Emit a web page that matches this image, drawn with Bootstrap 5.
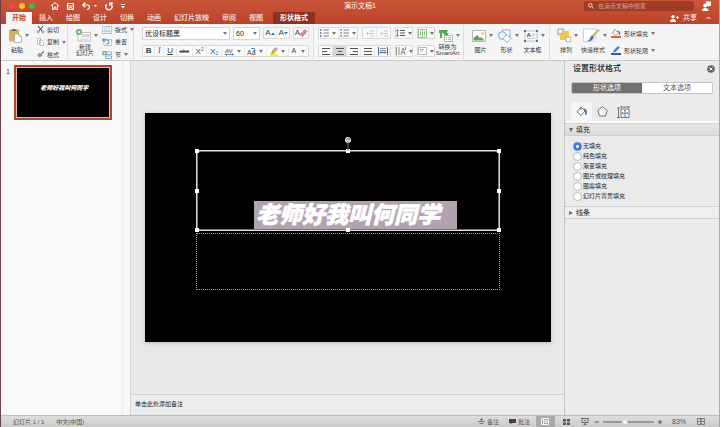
<!DOCTYPE html>
<html lang="zh-CN">
<head>
<meta charset="utf-8">
<meta name="viewport" content="width=device-width, initial-scale=1">
<title>演示文稿1</title>
<link href="https://cdn.jsdelivr.net/npm/bootstrap@5.3.0/dist/css/bootstrap.min.css" rel="stylesheet">
<style>
:root{--ink:#333;--line:#d2d2d2}
body{font:6px/8px "Liberation Sans","Noto Sans CJK SC",sans-serif;color:var(--ink);background:#ececec;border-left:1px solid #6f3f4c;border-right:1px solid #a9a9a9}
svg{display:block;flex:none;overflow:visible}
.btn,.form-select,.form-control{font-size:6px;line-height:8px;padding:0;border-radius:0;color:inherit;min-height:0}
.btn{border:0;display:inline-flex;align-items:center;justify-content:center;white-space:nowrap}
.caret{flex:none;border:solid transparent;border-width:3px 2px 0;border-top-color:#777;width:0;height:0}
/* title bar and tabs */
.top-area{background:linear-gradient(#ca563a,#c34c31 50%,#b9422a);color:#fff}
.title-row{height:12px;display:grid;grid-template-columns:1fr auto 1fr;align-items:center;font-size:7px}
.light{width:6px;height:6px;border-radius:50%}
.search-box{width:110px;height:10px;background:#a23b26;border-radius:2px}
.search-box input{background:transparent;border:0;color:#fff;height:10px}
.search-box input::placeholder{color:#dfa797;opacity:1}
.tab-row{height:12px;gap:1px;padding-left:5px}
.tab-row .nav-link{font-size:7px;line-height:11px;padding:0 6px;color:#fbe9e4;font-weight:500}
.tab-row .nav-link.active{background:#f7f6f6;color:#bf4327;font-weight:700;line-height:12px}
.tab-row .nav-link.context{background:#8d3020;color:#fff;font-weight:700;padding:0 7px;margin-left:3px;border-radius:2px 2px 0 0}
.share{font-size:7px!important}
/* ribbon */
.ribbon{display:grid;grid-template-columns:67fr 66fr 180fr 150fr 86fr 169fr;height:37px;background:#f6f5f5;border-bottom:1px solid #c9c9c9}
.ribbon-group{border-right:1px solid #dedede;margin:1px 0;display:flex;min-width:0;white-space:nowrap}
.ribbon-group:last-child{border:0}
.rows{padding:2px 0}
.big{flex-direction:column;justify-content:flex-start;line-height:6px;padding-top:2px!important}
.big .pic{display:flex;align-items:center;gap:3px;height:17px;padding-left:4px}
.big .cap{height:12px;display:flex;align-items:center;text-align:center;line-height:6px}
.big+.big{margin-left:1px}
.stack{display:flex;flex-direction:column;justify-content:space-between;align-items:flex-start}
.stack .btn{gap:3px;height:9px}
.boxed{height:12px;border:1px solid #d9d9d9;border-radius:1px;background:#fafafa;display:flex}
.boxed .btn{height:10px;gap:3px;color:#444;font-size:8px;flex:1 1 auto}
.boxed .btn+.btn{border-left:1px solid #e8e8e8}
.boxed .btn.on{background:#d5d5d5}
.form-select.pick{height:13px;line-height:11px;font-size:7px;border:1px solid #d4d4d4;padding:0 2px;background:#fff;color:#222}
.pick-wrap{position:relative}
.pick-wrap .caret{position:absolute;right:3px;top:5px;pointer-events:none}
/* slides */
.work{display:grid;grid-template-columns:130px 1fr 155px;flex:1;min-height:0}
.slides{background:#f8f8f8;border-right:1px solid #d5d5d5;padding-left:5px}
.slides .strip{width:117px;border-right:1px solid #ededed;padding-top:4px;height:100%}
.strip .num{font-size:7px;margin-top:3px;color:#444}
.thumb{width:98px;aspect-ratio:98/55;background:#000;border:2px solid #ac4631;outline:1px solid #f0b59f;outline-offset:-3px;color:#fff;position:relative}
.thumb span{position:absolute;left:26%;top:34%;font:italic 900 6px/8px "Noto Sans CJK SC",sans-serif;white-space:nowrap}
.stage{padding:0 13px 0 14px;display:flex;align-items:center;flex:1;background:#e9e9e9}
.slide-page{width:100%;aspect-ratio:406/229;background:#000;position:relative;box-shadow:0 1px 4px #bbb}
.frame{position:absolute;left:12.5%;width:75%;top:16.3%;height:35.3%;border:1px solid #ddd;box-shadow:inset 0 0 0 1px #777;display:flex;align-items:flex-end;justify-content:center}
.subframe{position:absolute;left:12.5%;width:75%;top:52.5%;height:24.8%;border:1px dotted #aaa}
.selected-text{background:#b1a4b0;color:#fff;font:italic 900 23px/24px "Noto Sans CJK SC",sans-serif;-webkit-text-stroke:.6px #fff;padding:0 17px 4px 2px;margin:0 0 1px 15px;white-space:nowrap}
.grip{position:absolute;width:4px;height:4px;background:#fff;transform:translate(-50%,-50%)}
.spin{position:absolute;left:50%;top:-14px;transform:translateX(-50%)}
.notes{height:21px;border-top:1px solid #cfcfcf;padding:5px 4px;background:#ededed;color:#222}
/* format pane */
.pane{background:#ebebeb;border-left:1px solid #c4c4c4}
.pane h2{font-size:8px;line-height:16px;margin:0;font-weight:500;color:#222}
.seg{margin:5px 6px 0;height:12px;border:1px solid #c6c6c6;border-radius:2px;background:#fff;overflow:hidden}
.seg .btn{flex:1;font-size:7px;height:10px;color:#555}
.seg .btn.on{background:#707070;color:#fff}
.pane-tabs{margin-top:8px;padding-left:6px;border-bottom:2px solid #fafafa}
.pane-tabs .btn{width:21px;height:19px}
.pane-tabs .btn.on{background:#f7f7f7}
.sect{width:100%;height:13px;background:linear-gradient(#e6e6e6,#dadada);border-top:1px solid #d2d2d2!important;border-bottom:1px solid #cdcdcd!important;font-size:7px!important;justify-content:flex-start!important;gap:3px;padding-left:4px!important;color:#222!important}
.sect.closed{background:#efefef}
.fills{padding:5px 8px 5px}
.fills .form-check{min-height:0;margin:0;padding:0;height:10px;display:flex;align-items:center;gap:1px;color:#222}
.fills .form-check-input{float:none;margin:0;width:9px;height:9px;border:1px solid #bcbcbc;background-color:#fff;flex:none}
.fills .form-check-input:checked{background:radial-gradient(#fff 0 1px,#3f78ea 2px);border-color:#3f78ea}
/* status bar */
.status{height:12px;background:linear-gradient(#dedede,#cacaca);border-top:1px solid #bdbdbd;color:#555;padding:0 14px 0 12px}
.status .lang{margin-left:12px}
.status .btn{gap:2px;height:11px}
.status .comments{margin:0 6px 0 10px}
.status .view-on{width:19px;background:#a9a9a9}
.status .play{margin:0 6px 0 11px}
.status .pct{margin:0 11px 0 10px;font-size:7px}
.zoom-range{appearance:none;width:51px;height:6px;background:linear-gradient(#999,#999) center/100% 2px no-repeat;margin:0 4px}
.zoom-range::-webkit-slider-thumb{appearance:none;width:6px;height:6px;border-radius:50%;background:#fff;border:1px solid #ccc}
</style>
<script src="https://cdn.jsdelivr.net/npm/bootstrap@5.3.0/dist/js/bootstrap.bundle.min.js"></script>
</head>
<body class="vh-100 d-flex flex-column overflow-hidden">
<header class="top-area">
  <div class="title-row">
    <div class="d-flex align-items-center">
      <div class="d-flex ms-1 gap-1 ps-1">
        <span class="light" style="background:#ef4b40"></span><span class="light" style="background:#f6bd2d"></span><span class="light" style="background:#3cba4a"></span>
      </div>
      <div class="d-flex align-items-center ms-3">
        <button class="btn" aria-label="主页"><svg width="8" height="8" viewBox="0 0 8 8" fill="none" stroke="#fff"><path d="M0 4 4 .7 8 4M1.5 3.5V7.5H3.2V5H4.8V7.5H6.5V3.5"/></svg></button>
        <button class="btn ms-2" aria-label="保存"><svg width="7" height="7" viewBox="0 0 7 7" fill="none" stroke="#fff"><path d="M.5.5H6.5V6.5H.5ZM.5 3H6.5M2 6V4.7H5V6.5"/></svg></button>
        <button class="btn ms-2" aria-label="撤消"><svg width="8" height="8" viewBox="0 0 8 8" fill="none" stroke="#fff" stroke-width="1.2"><path d="M3.2.5.8 3l2.4 2.4M1 3H5.4Q7.4 3 7.4 5T5 7.5"/></svg><svg class="ms-1" width="3" height="2" fill="#fff"><path d="M0 0H3L1.5 2Z"/></svg></button>
        <button class="btn ms-2" aria-label="重做"><svg width="8" height="8" viewBox="0 0 8 8" fill="none" stroke="#fff" stroke-width="1.3"><path d="M1.7 2.2A3.2 3.2 0 1 0 6.7 3M7.8 1H4.8V4M5 1.2 7.2 3"/></svg></button>
        <button class="btn ms-2" aria-label="更多"><svg width="4" height="5" fill="#fff"><path d="M0 0H4V1H0ZM0 2H4L2 4.5Z"/></svg></button>
      </div>
    </div>
    <div>演示文稿1</div>
    <div class="d-flex justify-content-end align-items-center gap-2">
      <label class="search-box d-flex align-items-center ps-1"><svg width="6" height="6" viewBox="0 0 6 6" fill="none" stroke="#fff" stroke-width=".8"><circle cx="2.3" cy="2.3" r="1.8"/><path d="m3.7 3.7 2 2"/></svg><input class="form-control ms-1" aria-label="搜索" placeholder="在演示文稿中搜索"></label>
      <button class="btn me-2" aria-label="帐户"><svg width="9" height="10" viewBox="0 0 9 10" fill="#fff"><path d="M3.5.5H9V5H7L6 6V5H5.2Z"/><circle cx="3.2" cy="4.5" r="2"/><path d="M0 10Q0 7 3.2 7T6.5 10Z"/></svg></button>
    </div>
  </div>
  <nav class="tab-row nav flex-nowrap" aria-label="功能区">
    <a class="nav-link active" href="#">开始</a><a class="nav-link" href="#">插入</a><a class="nav-link" href="#">绘图</a><a class="nav-link" href="#">设计</a><a class="nav-link" href="#">切换</a><a class="nav-link" href="#">动画</a><a class="nav-link" href="#">幻灯片放映</a><a class="nav-link" href="#">审阅</a><a class="nav-link" href="#">视图</a><a class="nav-link context" href="#">形状格式</a>
    <button class="btn ms-auto share"><svg class="me-1" width="9" height="7" viewBox="0 0 9 7" fill="#fff"><circle cx="3" cy="1.8" r="1.7"/><path d="M0 7Q0 4 3 4T6 7ZM6 2H7V1H8V2H9V3H8V4H7V3H6Z"/></svg>共享</button>
    <button class="btn ms-2 me-2" aria-label="折叠功能区"><svg width="5" height="4" fill="none" stroke="#fff"><path d="M.5 3 2.5 1 4.5 3"/></svg></button>
  </nav>
</header>

<section class="ribbon">
  <div class="ribbon-group">
    <button class="btn big ms-1"><span class="pic"><svg width="13" height="15" viewBox="0 0 13 15"><rect y="1.5" width="10" height="12" rx="1" fill="#dfae5d"/><path d="M2.5 3V1.5H4Q5 0 6 1.5H7.5V3Z" fill="#666"/><path d="M5.5 6H10L12.5 8.5V14.5H5.5Z" fill="#fff" stroke="#999" stroke-width=".7"/><path d="M10 6V8.5H12.5" fill="none" stroke="#999" stroke-width=".6"/></svg><i class="caret"></i></span><span class="cap">粘贴</span></button>
    <div class="stack ms-2">
      <button class="btn"><svg width="7" height="7" viewBox="0 0 7 7" fill="none"><path d="m1 0 4 5M6 0 2 5" stroke="#333"/><circle cx="1.2" cy="5.8" r="1" stroke="#4380bd" stroke-width=".8"/><circle cx="5.8" cy="5.8" r="1" stroke="#4380bd" stroke-width=".8"/></svg>剪切</button>
      <button class="btn"><svg width="7" height="8" viewBox="0 0 7 8" fill="#fff" stroke="#a9a9a9" stroke-width=".7"><path d="M.5.5H3.5V6H.5ZM2.5 2H5L6.5 3.5V7.5H2.5Z"/></svg>复制<i class="caret"></i></button>
      <button class="btn"><svg width="7" height="7" viewBox="0 0 8 7"><path d="M7.5 0 5 3" stroke="#666" stroke-width="1.5"/><path d="m3 1.5 3 3-1 1-3-3Z" fill="#777"/><path d="M2 2.5 5 5.5 3 7 0 4Z" fill="#6d9bc5"/></svg>格式</button>
    </div>
  </div>
  <div class="ribbon-group">
    <button class="btn big ms-1"><span class="pic"><svg width="15" height="14" viewBox="0 0 15 14"><path d="M2 3.5H14.5V12H2Z" fill="#fff" stroke="#aaa" stroke-width=".7"/><path d="M6 5.5H13V7.5H6ZM4 9H13M4 10.5H13" fill="#ddd" stroke="#bbb" stroke-width=".5"/><circle cx="3" cy="3" r="2.9" fill="#55a84d"/><path d="M3 1.2V4.8M1.2 3H4.8" stroke="#fff"/></svg><i class="caret"></i></span><span class="cap">新建<br>幻灯片</span></button>
    <div class="stack ms-1">
      <button class="btn"><svg width="10" height="8" viewBox="0 0 10 8" fill="#fff" stroke="#9ca9b9" stroke-width=".7"><path d="M.5.5H9.5V7.5H.5ZM2 2H8M2 4H4.5V6H2ZM6 4H8V6H6Z"/></svg>版式<i class="caret"></i></button>
      <button class="btn"><svg width="10" height="8" viewBox="0 0 10 8"><path d="M2 1.5H9.5V7.5H2Z" fill="#fff" stroke="#aaa" stroke-width=".7"/><path d="M2.5 0 .5 2l2 2M.8 2H5Q7 2 7 4T4.5 6" fill="none" stroke="#3977be"/></svg>重置</button>
      <button class="btn"><svg width="10" height="8" viewBox="0 0 10 8"><path d="M4 1H9.5V3.5H4ZM3.5 5H9.5V7.5H3.5Z" fill="#fff" stroke="#6d9bc5" stroke-width=".8"/><circle cx="2.3" cy="2.3" r="2.2" fill="#55a84d"/><path d="M2.3 1V3.6M1 2.3H3.6" stroke="#fff" stroke-width=".8"/></svg>节<i class="caret"></i></button>
    </div>
  </div>
  <div class="ribbon-group rows flex-column px-1 justify-content-between">
    <div class="d-flex ms-1" style="gap:3px">
      <span class="pick-wrap"><select class="form-select pick" style="width:88px" aria-label="字体"><option>优设标题黑</option></select><i class="caret"></i></span>
      <span class="pick-wrap"><select class="form-select pick" style="width:27px" aria-label="字号"><option>60</option></select><i class="caret"></i></span>
      <span class="boxed" style="width:29px"><button class="btn gap-0" aria-label="增大字号">A<svg width="4" height="3" fill="#2d6eb5"><path d="M0 3H4L2 .5Z"/></svg></button><button class="btn gap-0" aria-label="减小字号">A<svg width="4" height="3" fill="#2d6eb5"><path d="M0 0H4L2 2.5Z"/></svg></button></span>
      <span class="boxed" style="width:17px"><button class="btn gap-0" aria-label="清除格式">A<svg width="7" height="8" viewBox="0 0 7 8" stroke="#a64665" stroke-width=".5"><path d="M5 .5 7 2.5 2.5 7.5 0 5.5Z" fill="#d78da2"/></svg></button></span>
    </div>
    <div class="boxed ms-1">
      <button class="btn fw-bold">B</button><button class="btn fst-italic" style="font-family:'Liberation Serif',serif">I</button><button class="btn text-decoration-underline">U</button><button class="btn text-decoration-line-through" style="font-size:6px">abc</button><button class="btn d-block" style="line-height:7px">X<sup style="font-size:5px;color:#2d6eb5">2</sup></button><button class="btn d-block" style="line-height:7px">X<sub style="font-size:5px;color:#2d6eb5">2</sub></button>
      <button class="btn" aria-label="字符间距"><svg width="9" height="9" viewBox="0 0 9 9"><text y="5.5" font-size="6" fill="#444">AV</text><path d="M.5 7.5H8.5M2 6.5.5 7.5 2 8.5M7 6.5 8.5 7.5 7 8.5" stroke="#2d6eb5" stroke-width=".7" fill="none"/></svg><i class="caret"></i></button>
      <button class="btn" aria-label="更改大小写"><svg width="9" height="8" viewBox="0 0 9 8"><text y="7.5" font-size="7" fill="#444">Aa</text><path d="M4 1.5H7.5V4M6.5 3 7.5 4.2 8.5 3" stroke="#2d6eb5" stroke-width=".8" fill="none"/></svg><i class="caret"></i></button>
      <button class="btn" aria-label="突出显示"><svg width="8" height="9" viewBox="0 0 8 9"><path d="M0 6.5H8V9H0Z" fill="#ffee20"/><path d="M5.5.5 7.5 2 4 6 1.5 6.5 2.3 4Z" fill="#e8b14c" stroke="#777" stroke-width=".5"/></svg><i class="caret"></i></button>
      <button class="btn" aria-label="字体颜色"><svg width="7" height="9" viewBox="0 0 7 9"><text x=".5" y="6" font-size="7" fill="#444">A</text><path d="M0 7H7V9H0Z" fill="#fff"/></svg><i class="caret"></i></button>
    </div>
  </div>
  <div class="ribbon-group">
    <div class="rows d-flex flex-column justify-content-between ms-1">
      <div class="d-flex gap-1">
        <span class="boxed" style="width:40px"><button class="btn" aria-label="项目符号"><svg width="9" height="8" viewBox="0 0 9 8"><path d="M3.5 1H9M3.5 4H9M3.5 7H9" stroke="#666" stroke-width=".8"/><path d="M0 .3H1.5V1.7H0ZM0 3.3H1.5V4.7H0ZM0 6.3H1.5V7.7H0Z" fill="#2d6eb5"/></svg><i class="caret"></i></button><button class="btn" aria-label="编号"><svg width="9" height="8" viewBox="0 0 9 8"><path d="M3.5 1H9M3.5 4H9M3.5 7H9" stroke="#666" stroke-width=".8"/><path d="M1 0V2M1 3V5M1 6V8" stroke="#2d6eb5"/></svg><i class="caret"></i></button></span>
        <span class="boxed" style="width:29px"><button class="btn" aria-label="减少缩进"><svg width="8" height="7" viewBox="0 0 8 7" stroke="#b8c4d2" fill="none"><path d="M4 1H8M4 3.5H8M4 6H8M3.5 3.5H.5M2 2 .5 3.5 2 5"/></svg></button><button class="btn" aria-label="增加缩进"><svg width="8" height="7" viewBox="0 0 8 7" stroke="#b8c4d2" fill="none"><path d="M4 1H8M4 3.5H8M4 6H8M0 3.5H3M1.5 2 3 3.5 1.5 5"/></svg></button></span>
        <span class="boxed" style="width:18px"><button class="btn" aria-label="行距"><svg width="9" height="8" viewBox="0 0 9 8" fill="none"><path d="M4 1.5H9M4 4H9M4 6.5H9" stroke="#555"/><path d="M1.5.5V7.5M.2 2 1.5.5 2.8 2M.2 6 1.5 7.5 2.8 6" stroke="#2d6eb5" stroke-width=".8"/></svg><i class="caret"></i></button></span>
        <span class="boxed" style="width:18px"><button class="btn" aria-label="分栏"><svg width="9" height="9" viewBox="0 0 9 9" fill="#fff" stroke="#79b874" stroke-width=".8"><path d="M.5.5H8.5V8.5H.5ZM4.5 1V8M2.5 2V7M6.5 2V7"/></svg><i class="caret"></i></button></span>
      </div>
      <div class="d-flex gap-1">
        <span class="boxed" style="width:73px"><button class="btn" aria-label="左对齐"><svg width="8" height="7" stroke="#555"><path d="M0 .5H8M0 3.5H5M0 6.5H8"/></svg></button><button class="btn on" aria-label="居中"><svg width="8" height="7" stroke="#555"><path d="M0 .5H8M2 3.5H6M0 6.5H8"/></svg></button><button class="btn" aria-label="右对齐"><svg width="8" height="7" stroke="#555"><path d="M0 .5H8M3 3.5H8M0 6.5H8"/></svg></button><button class="btn" aria-label="两端对齐"><svg width="8" height="7" stroke="#555"><path d="M0 .5H8M0 3.5H8M0 6.5H8"/></svg></button><button class="btn" aria-label="分散对齐"><svg width="10" height="8" viewBox="0 0 10 8" fill="none" stroke="#2d6eb5"><path d="M.5 0V8M9.5 0V8M2 5.5H8M3 4.5 2 5.5 3 6.5M7 4.5 8 5.5 7 6.5"/><path d="M2 1.5H8M2 3.5H8" stroke="#666" stroke-width=".7"/></svg></button></span>
        <span class="boxed" style="width:18px"><button class="btn" aria-label="文字方向"><svg width="10" height="8" viewBox="0 0 10 8" fill="none" stroke="#777" stroke-width=".8"><path d="M.5 0V8M3 0V8M5 8 7 1 9 8M6 5.5H8"/><path d="M9.5 0V3" stroke="#2d6eb5"/></svg><i class="caret"></i></button></span>
        <span class="boxed" style="width:18px"><button class="btn" aria-label="对齐文本"><svg width="9" height="8" viewBox="0 0 9 8" fill="#fff" stroke="#999" stroke-width=".7"><path d="M.5.5H8.5V7.5H.5ZM2 2.5H6M2 4H5"/></svg><i class="caret"></i></button></span>
      </div>
    </div>
    <button class="btn big"><span class="pic"><svg width="14" height="12" viewBox="0 0 14 12"><path d="M0 0H9L7.5 3H10L7 7 4 3H3V8H1V3H0Z" fill="#56a653"/><path d="M5.5 5.5H13.5V11.5H5.5Z" fill="#fff" stroke="#6fac6a" stroke-width=".7"/><path d="M7 7.5H8M7 9.5H8M9 7.5H12M9 9.5H12" stroke="#888" stroke-width=".7"/></svg><i class="caret"></i></span><span class="cap">转换为<br>SmartArt</span></button>
  </div>
  <div class="ribbon-group">
    <button class="btn big ms-1"><span class="pic"><svg width="14" height="12" viewBox="0 0 14 12"><path d="M.5.5H13.5V11.5H.5Z" fill="#fff" stroke="#999" stroke-width=".7"/><path d="M1.5 10.5V8L5 5 8 8 9.5 7 12.5 10.5Z" fill="#5ba663"/><circle cx="10.5" cy="3.5" r="1.3" fill="#eebd43"/></svg><i class="caret"></i></span><span class="cap">图片</span></button>
    <button class="btn big"><span class="pic"><svg width="14" height="14" viewBox="0 0 14 14" fill="#fff" stroke="#4c8dcc" stroke-width=".7"><path d="M4.5 1H12V8H4.5Z"/><circle cx="4.3" cy="6.5" r="3.8" fill="#eaf3fc"/><path d="m9 5.5 4 4-4 4-4-4Z"/></svg><i class="caret"></i></span><span class="cap">形状</span></button>
    <button class="btn big"><span class="pic"><svg width="14" height="12" viewBox="0 0 14 12"><path d="M1 1H13V11H1Z" fill="#fff" stroke="#aaa" stroke-width=".7"/><path d="M0 0H2V2H0ZM12 0H14V2H12ZM0 10H2V12H0ZM12 10H14V12H12Z" fill="#3f79b5"/><text x="2.5" y="7" font-size="6" font-weight="700" fill="#333">A</text><path d="M7.5 4H11.5M7.5 6H11.5M3 8.5H11.5" stroke="#999" stroke-width=".6"/></svg><i class="caret"></i></span><span class="cap">文本框</span></button>
  </div>
  <div class="ribbon-group">
    <button class="btn big ms-1"><span class="pic"><svg width="13" height="13" viewBox="0 0 13 13"><path d="M0 0H6V6H0Z" fill="#fff" stroke="#999" stroke-width=".7"/><path d="M2 2H11V11H2Z" fill="#f2c64f"/><path d="M.3.3H4.5V4.5H.3ZM8 8H12.7V12.7H8Z" fill="#fff" stroke="#999" stroke-width=".7"/></svg><i class="caret"></i></span><span class="cap">排列</span></button>
    <button class="btn big"><span class="pic"><svg width="17" height="15" viewBox="0 0 17 15"><path d="M.5 1H13V9L10 13.5H.5Z" fill="#fff" stroke="#bbb" stroke-width=".7"/><path d="M16 1.5 10 8" stroke="#d8b35c" stroke-width="2"/><path d="m9 7 2 2-1 2Q8 14 4 13 7 12 7.5 9Z" fill="#4c79a9"/></svg><i class="caret"></i></span><span class="cap">快速样式</span></button>
    <div class="stack ms-1" style="padding:4px 0">
      <button class="btn"><svg width="10" height="9" viewBox="0 0 10 9"><path d="M0 7H10V9H0Z" fill="#e2681e"/><path d="m4 .5 3.5 3.5L4.5 6.5 1.5 4Z" fill="#fff" stroke="#777" stroke-width=".7"/><path d="M6.5 2Q9.5 3 8.5 6" stroke="#3576ba" fill="none" stroke-width="1.2"/></svg>形状填充<i class="caret"></i></button>
      <button class="btn"><svg width="10" height="9" viewBox="0 0 10 9"><path d="M0 7H10V9H0Z" fill="#2c5aa8"/><path d="M7 0 9 1.5 4.5 6 1.5 6.5 3 4Z" fill="#4c83c8"/></svg>形状轮廓<i class="caret"></i></button>
    </div>
  </div>
</section>

<main class="work">
  <aside class="slides">
    <div class="strip d-flex align-items-start"><span class="num">1</span><div class="thumb ms-1"><span>老师好我叫何同学</span></div></div>
  </aside>
  <section class="d-flex flex-column">
    <div class="stage">
      <div class="slide-page">
        <div class="subframe"></div>
        <div class="frame">
          <div class="selected-text">老师好我叫何同学</div>
          <i class="grip" style="left:0;top:0"></i><i class="grip" style="left:50%;top:0"></i><i class="grip" style="left:100%;top:0"></i><i class="grip" style="left:0;top:50%"></i><i class="grip" style="left:100%;top:50%"></i><i class="grip" style="left:0;top:100%"></i><i class="grip" style="left:50%;top:100%"></i><i class="grip" style="left:100%;top:100%"></i>
          <svg class="spin" width="6" height="14" viewBox="0 0 6 14" fill="none"><path d="M3 6V14" stroke="#777"/><circle cx="3" cy="3" r="3" fill="#eee"/><path d="M4.5 2A1.7 1.7 0 1 0 4.5 4M4.8 1V2.5H3" stroke="#555" stroke-width=".7"/></svg>
        </div>
      </div>
    </div>
    <div class="notes">单击此处添加备注</div>
  </section>
  <aside class="pane">
    <div class="d-flex justify-content-between align-items-center ps-2 pe-1"><h2>设置形状格式</h2><button class="btn" aria-label="关闭"><svg width="8" height="8" viewBox="0 0 8 8"><circle cx="4" cy="4" r="3.8" fill="#666"/><path d="m2.5 2.5 3 3M5.5 2.5l-3 3" stroke="#fff"/></svg></button></div>
    <div class="seg d-flex"><button class="btn on">形状选项</button><button class="btn">文本选项</button></div>
    <div class="pane-tabs d-flex">
      <button class="btn on" aria-label="填充与线条"><svg width="12" height="11" viewBox="0 0 12 11" fill="none"><path d="M5 1 9 5 5 9.5 1 6Z" fill="#fff" stroke="#555" stroke-width=".8"/><path d="M5 1V4" stroke="#555" stroke-width=".8"/><path d="M7.5 3H9.5Q11.3 4.5 10 9 9.3 8 9.3 5" fill="#3d78b5" stroke="#3d78b5" stroke-width=".7"/></svg></button>
      <button class="btn" aria-label="效果"><svg width="11" height="11" viewBox="0 0 11 11" fill="#f5f5f5" stroke="#555" stroke-width=".8"><path d="M5.5.7 10.2 4.3 8.5 10H2.5L.8 4.3Z"/></svg></button>
      <button class="btn" aria-label="大小与属性"><svg width="13" height="12" viewBox="0 0 13 12" fill="none" stroke="#555" stroke-width=".8"><path d="M1.5 2V11.5M0 2H3M0 11.5H3M4 0V2M12 0V2M4 1H12"/><path d="M4 3H12V11.5H4Z" fill="#fff"/><path d="M8 4V10.5M5 7.2H11M7 5 8 4 9 5M7 9.5 8 10.5 9 9.5M6 6.2 5 7.2 6 8.2M10 6.2 11 7.2 10 8.2" stroke="#3d78b5"/></svg></button>
    </div>
    <button class="btn sect"><svg width="4" height="4" fill="#666"><path d="M0 0H4L2 4Z"/></svg>填充</button>
    <div class="fills">
      <div class="form-check"><input class="form-check-input" type="radio" name="fill" id="f1" checked><label for="f1">无填充</label></div>
      <div class="form-check"><input class="form-check-input" type="radio" name="fill" id="f2"><label for="f2">纯色填充</label></div>
      <div class="form-check"><input class="form-check-input" type="radio" name="fill" id="f3"><label for="f3">渐变填充</label></div>
      <div class="form-check"><input class="form-check-input" type="radio" name="fill" id="f4"><label for="f4">图片或纹理填充</label></div>
      <div class="form-check"><input class="form-check-input" type="radio" name="fill" id="f5"><label for="f5">图案填充</label></div>
      <div class="form-check"><input class="form-check-input" type="radio" name="fill" id="f6"><label for="f6">幻灯片背景填充</label></div>
    </div>
    <button class="btn sect closed"><svg width="4" height="4" fill="#666"><path d="M0 0V4L4 2Z"/></svg>线条</button>
  </aside>
</main>

<footer class="status d-flex align-items-center">
  <span>幻灯片 1 / 1</span><span class="lang">中文(中国)</span>
  <button class="btn ms-auto"><svg width="7" height="7" viewBox="0 0 7 7" stroke="#666" fill="#666" stroke-width=".8"><path d="M0 3.5H7M1.5 5.5H5.5"/><path d="M2.5 2 3.5.5 4.5 2Z"/></svg>备注</button>
  <button class="btn comments"><svg width="7" height="7" fill="#444"><path d="M0 1H7V5H3L1.5 6.5V5H0Z"/></svg>批注</button>
  <button class="btn view-on" aria-label="普通视图"><svg width="8" height="7" viewBox="0 0 8 7" fill="none" stroke="#fff" stroke-width=".9"><path d="M.5.5H7.5V6.5H.5ZM2.5.5V6.5M4 2.5H6V4.5H4Z"/></svg></button>
  <button class="btn ms-2" aria-label="幻灯片浏览"><svg width="7" height="6" fill="#555"><path d="M0 0H3V2.5H0ZM4 0H7V2.5H4ZM0 3.5H3V6H0ZM4 3.5H7V6H4Z"/></svg></button>
  <button class="btn play" aria-label="放映"><svg width="8" height="7" viewBox="0 0 8 7" fill="none" stroke="#555" stroke-width=".8"><path d="M0 .5H8M1 .5V4.5H7V.5M4 4.5V6.5M2.5 6.5H5.5M3 2.5H5"/></svg></button>
  <button class="btn" aria-label="缩小"><svg width="4" height="4" stroke="#555"><path d="M0 2H4"/></svg></button>
  <input type="range" class="zoom-range" min="0" max="100" value="42" aria-label="缩放">
  <button class="btn" aria-label="放大"><svg width="4" height="4" stroke="#555"><path d="M0 2H4M2 0V4"/></svg></button>
  <button class="btn pct">83%</button>
  <button class="btn" aria-label="适应窗口"><svg width="8" height="7" viewBox="0 0 8 7" fill="none" stroke="#666" stroke-width=".8"><path d="M.5.5H7.5V6.5H.5ZM4 1V6M1 3.5H7M3 2 4 1 5 2M3 5 4 6 5 5"/></svg></button>
</footer>
</body>
</html>
